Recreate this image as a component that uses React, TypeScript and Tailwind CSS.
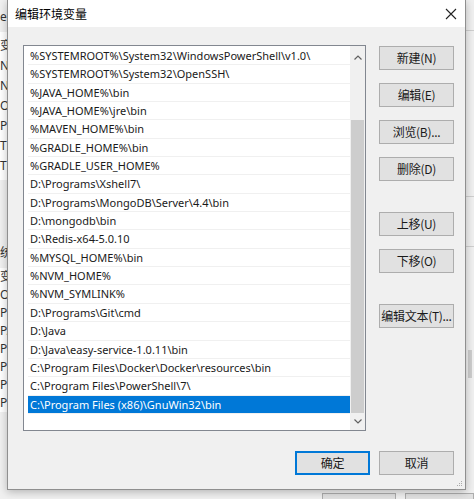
const paths = [
  "%SYSTEMROOT%\\System32\\WindowsPowerShell\\v1.0\\",
  "%SYSTEMROOT%\\System32\\OpenSSH\\",
  "%JAVA_HOME%\\bin",
  "%JAVA_HOME%\\jre\\bin",
  "%MAVEN_HOME%\\bin",
  "%GRADLE_HOME%\\bin",
  "%GRADLE_USER_HOME%",
  "D:\\Programs\\Xshell7\\",
  "D:\\Programs\\MongoDB\\Server\\4.4\\bin",
  "D:\\mongodb\\bin",
  "D:\\Redis-x64-5.0.10",
  "%MYSQL_HOME%\\bin",
  "%NVM_HOME%",
  "%NVM_SYMLINK%",
  "D:\\Programs\\Git\\cmd",
  "D:\\Java",
  "D:\\Java\\easy-service-1.0.11\\bin",
  "C:\\Program Files\\Docker\\Docker\\resources\\bin",
  "C:\\Program Files\\PowerShell\\7\\",
  "C:\\Program Files (x86)\\GnuWin32\\bin",
];

const selected = paths.length - 1;

// letters of the parent window peeking out at the left edge
const backTop = ["变", "N", "N", "O", "Pa", "TE", "TM"];
const backBottom = ["变", "O", "Pa", "PA", "PO", "PR", "PR", "PR"];

const font = { fontFamily: '"Segoe UI", "Noto Sans", "Noto Sans CJK SC", sans-serif' };
const cjk = { fontFamily: '"Noto Sans CJK SC", sans-serif' };

function Chevron({ up }: { up?: boolean }) {
  return (
    <svg width="8" height="5" viewBox="0 0 8 5" className="text-[#606060]">
      <path
        d={up ? "M0.5 4.5 L4 1 L7.5 4.5" : "M0.5 0.5 L4 4 L7.5 0.5"}
        fill="none"
        stroke="currentColor"
        strokeWidth="1.2"
      />
    </svg>
  );
}

function Btn({ label, primary }: { label: string; primary?: boolean }) {
  return (
    <button
      className={`h-[24px] w-[75px] whitespace-nowrap bg-[#e1e1e1] text-[12px] tracking-[-0.3px] text-[#1a1a1a] ${
        primary ? "border-2 border-[#0078d7]" : "border border-[#adadad]"
      }`}
    >
      {label}
    </button>
  );
}

export default function App() {
  return (
    <div className="relative h-[499px] w-[474px] overflow-hidden bg-[#f0f0f0]" style={font}>
      {/* parent window behind the dialog */}
      <div className="absolute left-0 top-0 h-[499px] w-[474px] bg-[#f0f0f0]">
        <div className="absolute left-0 top-[8px] text-[12px] text-[#333]">e</div>
        <div className="absolute left-0 top-[32px] flex h-[148px] w-[7px] flex-col bg-white pt-[4px]">
          {backTop.map((t, i) => (
            <div key={i} className="h-[20px] text-[12px] leading-[20px] text-[#333]">
              {t}
            </div>
          ))}
        </div>
        <div className="absolute left-0 top-[244px] text-[12px] text-[#333]">统</div>
        <div className="absolute left-0 top-[268px] flex h-[144px] w-[7px] flex-col bg-white">
          {backBottom.map((t, i) => (
            <div key={i} className="h-[18px] text-[12px] leading-[18px] text-[#333]">
              {t}
            </div>
          ))}
        </div>
        <div className="absolute right-0 top-[30px] h-px w-[8px] bg-[#cfcfcf]" />
        <div className="absolute right-0 top-[196px] h-px w-[8px] bg-[#cfcfcf]" />
        <div className="absolute right-0 top-[246px] h-px w-[8px] bg-[#cfcfcf]" />
        <div className="absolute right-[2px] top-[350px] h-[28px] w-[4px] bg-[#cdcdcd]" />
        <div className="absolute bottom-0 left-[322px] h-[6px] w-[74px] border border-b-0 border-[#adadad] bg-[#e1e1e1]" />
        <div className="absolute bottom-0 left-[405px] h-[6px] w-[69px] border border-b-0 border-[#adadad] bg-[#e1e1e1]" />
      </div>

      {/* 编辑环境变量 dialog */}
      <div className="absolute left-[7px] top-0 flex h-[490px] w-[459px] flex-col border-x border-b border-[#8f8f8f] bg-[#f0f0f0] shadow-[0_2px_8px_rgba(0,0,0,0.25)]">
        <div className="flex h-[27px] shrink-0 items-center justify-between bg-white pl-[7px] pr-[8px]">
          <span className="text-[12px] text-black" style={cjk}>
            编辑环境变量
          </span>
          <svg width="12" height="12" viewBox="0 0 12 12">
            <path d="M1 1 L11 11 M11 1 L1 11" stroke="#222" strokeWidth="1.1" />
          </svg>
        </div>

        <div className="flex flex-1 pl-[15px] pt-[18px]">
          <div className="flex h-[386px] w-[343px] border border-[#828790] bg-white">
            <div className="flex-1 pl-[4px] pt-[1px]">
              {paths.map((p, i) => (
                <div
                  key={p}
                  className={`h-[18.35px] truncate border-b border-[#f0f0f0] pl-[2px] text-[11px] leading-[17.35px] ${
                    i === selected ? "border-[#0078d7] bg-[#0078d7] text-white" : "text-[#1a1a1a]"
                  }`}
                >
                  {p}
                </div>
              ))}
            </div>
            <div className="flex w-[15px] flex-col items-center bg-[#f0f0f0]">
              <div className="flex h-[17px] items-center justify-center pt-[6px]">
                <Chevron up />
              </div>
              <div className="mt-[57px] h-[293px] w-[13px] bg-[#cdcdcd]" />
              <div className="flex flex-1 items-center justify-center">
                <Chevron />
              </div>
            </div>
          </div>

          <div className="ml-[13px] flex flex-col pt-[1px]" style={cjk}>
            <Btn label="新建(N)" />
            <div className="h-[13px]" />
            <Btn label="编辑(E)" />
            <div className="h-[13px]" />
            <Btn label="浏览(B)..." />
            <div className="h-[13px]" />
            <Btn label="删除(D)" />
            <div className="h-[31px]" />
            <Btn label="上移(U)" />
            <div className="h-[13px]" />
            <Btn label="下移(O)" />
            <div className="h-[31px]" />
            <Btn label="编辑文本(T)..." />
          </div>
        </div>

        <div className="relative flex shrink-0 justify-end gap-[9px] pb-[14px] pr-[11px]" style={cjk}>
          <Btn label="确定" primary />
          <Btn label="取消" />
          <svg width="6" height="6" viewBox="0 0 6 6" className="absolute bottom-[2px] right-[2px]">
            <rect x="4" y="0" width="1" height="1" fill="#aaa" />
            <rect x="2" y="2" width="1" height="1" fill="#aaa" />
            <rect x="4" y="2" width="1" height="1" fill="#aaa" />
            <rect x="0" y="4" width="1" height="1" fill="#aaa" />
            <rect x="2" y="4" width="1" height="1" fill="#aaa" />
            <rect x="4" y="4" width="1" height="1" fill="#aaa" />
          </svg>
        </div>
      </div>
    </div>
  );
}
